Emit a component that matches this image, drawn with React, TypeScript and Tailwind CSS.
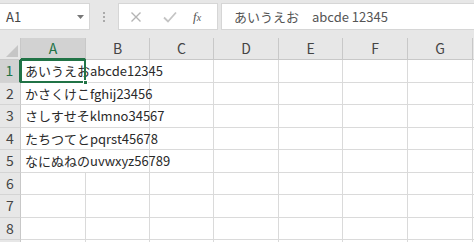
import React from "react";

const cols = ["A", "B", "C", "D", "E", "F", "G"];
const widths = ["w-[65px]", "w-[64px]", "w-[64px]", "w-[65px]", "w-[64px]", "w-[65px]", "w-[65px]"];

const rows = [
  "あいうえおabcde12345",
  "かさくけこfghij23456",
  "さしすせそklmno34567",
  "たちつてとpqrst45678",
  "なにぬねのuvwxyz56789",
  "",
  "",
  "",
  "",
];

const font = { fontFamily: '"Noto Sans CJK JP", "Noto Sans", sans-serif' };

export default function App() {
  return (
    <div className="w-[474px] h-[242px] overflow-hidden bg-[#e7e7e7] text-[#333]" style={font}>
      {/* Formula bar */}
      <div className="flex items-start h-[38px] pt-[3px]">
        <div className="w-[90px] h-[27px] bg-white border border-[#d6d6d6] border-l-0 flex items-center justify-between pl-[6px] pr-[5px]">
          <span className="text-[13px] text-[#444]">A1</span>
          <svg width="7" height="4" viewBox="0 0 7 4"><path d="M0 0h7L3.5 4z" fill="#777" /></svg>
        </div>
        <div className="w-[28px] h-[27px] flex flex-col items-center justify-center gap-[2px]">
          <span className="w-[2px] h-[2px] bg-[#aaa]" />
          <span className="w-[2px] h-[2px] bg-[#aaa]" />
          <span className="w-[2px] h-[2px] bg-[#aaa]" />
        </div>
        <div className="w-[100px] h-[27px] bg-white border border-[#d6d6d6] flex items-center pl-[11px]">
          <svg width="12" height="12" viewBox="0 0 12 12" className="mr-[21px]">
            <path d="M1.5 1.5l9 9M10.5 1.5l-9 9" stroke="#b4b4b4" strokeWidth="1.4" />
          </svg>
          <svg width="14" height="12" viewBox="0 0 14 12" className="mr-[16px]">
            <path d="M1 6.5l4 4L13 1.5" stroke="#c4c4c4" strokeWidth="1.8" fill="none" />
          </svg>
          <span className="text-[13px] italic text-[#555]" style={{ fontFamily: '"Liberation Serif", serif' }}>
            f<span className="text-[10px]">x</span>
          </span>
        </div>
        <div className="flex-1 h-[27px] ml-[3px] bg-white border border-[#d6d6d6] border-r-0 flex items-center pl-[12px]">
          <span className="text-[13px] text-[#555] whitespace-pre">あいうえお　abcde 12345</span>
        </div>
      </div>

      {/* Column headers */}
      <div className="flex h-[22px]">
        <div className="w-[21px] shrink-0 relative bg-[#e7e7e7] border-r border-b border-[#c8c8c8]">
          <svg width="12" height="12" viewBox="0 0 12 12" className="absolute right-[2px] bottom-[2px]">
            <path d="M12 0v12H0z" fill="#c6c6c6" />
          </svg>
        </div>
        {cols.map((c, i) => (
          <div
            key={c}
            className={
              widths[i] +
              " shrink-0 flex items-center justify-center text-[14px] border-r " +
              (i === 0
                ? "bg-[#d2d2d2] text-[#217346] border-[#c8c8c8] border-b-2 border-b-[#217346]"
                : "bg-[#e7e7e7] text-[#444] border-[#c8c8c8] border-b border-b-[#c8c8c8]")
            }
          >
            {c}
          </div>
        ))}
        <div className="flex-1 bg-[#e7e7e7] border-b border-[#c8c8c8]" />
      </div>

      {/* Rows */}
      {rows.map((text, r) => (
        <div key={r} className="flex h-[22.5px] bg-white">
          <div
            className={
              "w-[21px] shrink-0 flex items-center justify-center text-[14px] border-b border-b-[#d4d4d4] " +
              (r === 0
                ? "bg-[#d2d2d2] text-[#217346] border-r-2 border-r-[#217346]"
                : "bg-[#e7e7e7] text-[#444] border-r border-r-[#c8c8c8]")
            }
          >
            {r < 8 ? r + 1 : ""}
          </div>
          {text ? (
            <div className="w-[129px] shrink-0 relative flex items-center pl-[4px] border-r border-b border-[#dadada]">
              <span className="text-[13px] text-[#2a2a2a] whitespace-nowrap">{text}</span>
              {r === 0 && (
                <div className="absolute left-[-1px] top-[-1px] w-[66px] h-[23.5px] border-2 border-[#217346]">
                  <div className="absolute right-[-4px] bottom-[-4px] w-[5px] h-[5px] bg-[#217346] border border-white" />
                </div>
              )}
            </div>
          ) : (
            <>
              <div className="w-[65px] shrink-0 border-r border-b border-[#dadada]" />
              <div className="w-[64px] shrink-0 border-r border-b border-[#dadada]" />
            </>
          )}
          {widths.slice(2).map((w, i) => (
            <div key={i} className={w + " shrink-0 border-r border-b border-[#dadada]"} />
          ))}
          <div className="flex-1 border-b border-[#dadada]" />
        </div>
      ))}
    </div>
  );
}
